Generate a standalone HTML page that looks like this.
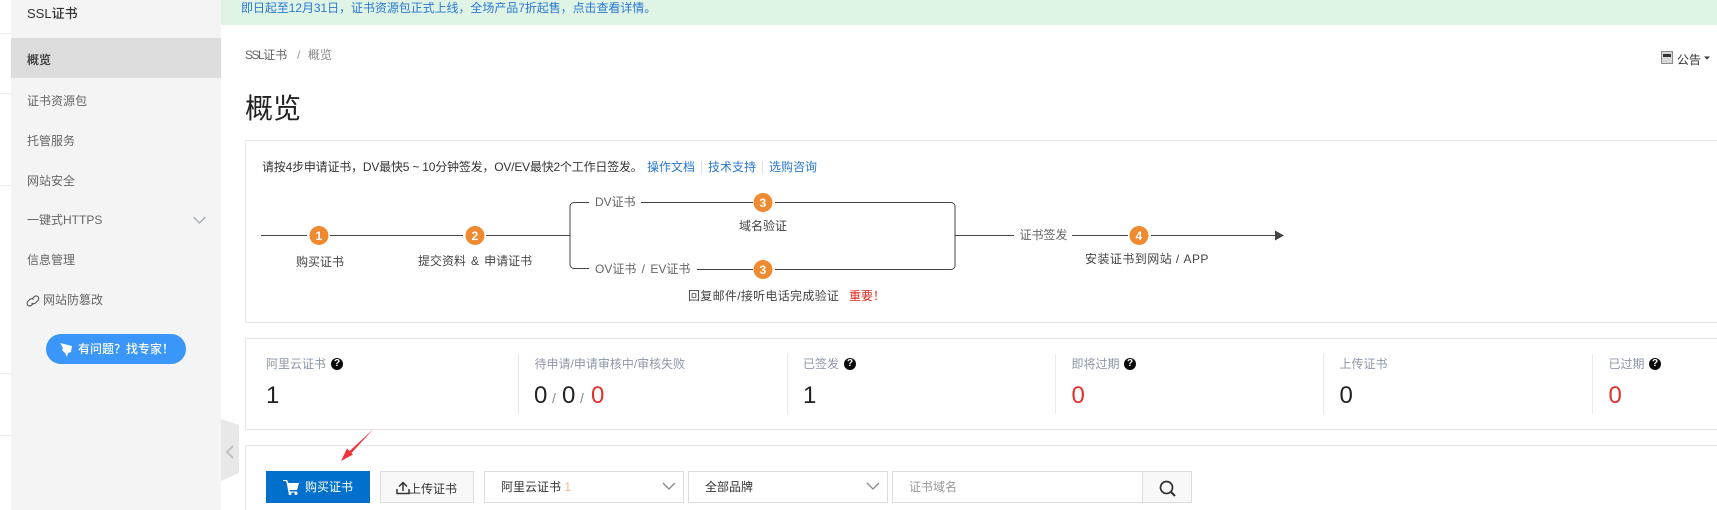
<!DOCTYPE html>
<html lang="zh">
<head>
<meta charset="utf-8">
<title>SSL证书</title>
<style>
html,body{margin:0;padding:0;background:#fff;width:1717px;height:510px;overflow:hidden}
body{position:relative;font-family:"Liberation Sans","Noto Sans CJK SC",sans-serif;font-size:12px;color:#333}
.a{position:absolute;white-space:nowrap;line-height:20px}
.box{position:absolute;box-sizing:border-box}
.side{left:27px;color:#666}
.lab{color:#8c97a8;top:354px}
.val{top:381px;font-size:24px;line-height:30px;color:#222}
.red{color:#e0312c}
.div{position:absolute;top:354px;width:1px;height:60px;background:#eaeaea}
.q{position:absolute;width:12px;height:12px;border-radius:50%;background:#0b0b0b;color:#fff;font:bold 10px/12px "Liberation Sans",sans-serif;text-align:center;top:358px}
.fl{color:#444}
.n{color:#fff;font-weight:bold;font-size:12px}
svg{position:absolute;left:0;top:0}
</style>
</head>
<body>
<div class="box" style="left:0;top:33px;width:11px;height:1px;background:#efefef"></div>
<div class="box" style="left:0;top:93px;width:11px;height:1px;background:#efefef"></div>
<div class="box" style="left:0;top:185px;width:11px;height:1px;background:#efefef"></div>
<div class="box" style="left:0;top:373px;width:11px;height:1px;background:#efefef"></div>
<div class="box" style="left:0;top:435px;width:11px;height:1px;background:#efefef"></div>

<div class="box" style="left:11px;top:0;width:210px;height:510px;background:#f4f4f4"></div>
<div class="box" style="left:11px;top:38px;width:210px;height:40px;background:#dcdcdc"></div>
<div class="a" style="left:27px;top:4px;font-size:13px;font-weight:500;color:#333">SSL证书</div>
<div class="a" style="left:27px;top:50px;font-weight:bold;color:#444">概览</div>
<div class="a side" style="top:91px">证书资源包</div>
<div class="a side" style="top:131px">托管服务</div>
<div class="a side" style="top:171px">网站安全</div>
<div class="a side" style="top:210px">一键式HTTPS</div>
<div class="a side" style="top:250px">信息管理</div>
<div class="a side" style="top:290px;left:43px">网站防篡改</div>
<div class="box" style="left:46px;top:334px;width:140px;height:30px;border-radius:15px;background:#3b96f9"></div>
<div class="a" style="left:78px;top:339px;color:#fff;font-weight:500">有问题？找专家！</div>

<div class="box" style="left:221px;top:0;width:1496px;height:25px;background:#e0f4e6"></div>
<div class="a" style="left:241px;top:-2px;color:#2a78d0;letter-spacing:-.06px">即日起至12月31日，证书资源包正式上线，全场产品7折起售，点击查看详情。</div>

<div class="a" style="left:245px;top:45px;color:#666"><span style="letter-spacing:-1.500px">SSL</span>证书</div>
<div class="a" style="left:297px;top:45px;color:#999">/</div>
<div class="a" style="left:308px;top:45px;color:#888">概览</div>
<div class="a" style="left:245px;top:89px;font-size:28px;line-height:40px;color:#222">概览</div>
<div class="a" style="left:1677px;top:50px;color:#333">公告</div>

<div class="box" style="left:245px;top:140px;width:1480px;height:183px;border:1px solid #e8e8e8"></div>
<div class="box" style="left:245px;top:338px;width:1480px;height:92px;border:1px solid #e8e8e8"></div>
<div class="box" style="left:245px;top:445px;width:1480px;height:80px;border:1px solid #e8e8e8"></div>

<div class="a" style="left:262px;top:157px;color:#333;letter-spacing:-.2px">请按4步申请证书，DV最快5 ~ 10分钟签发，OV/EV最快2个工作日签发。</div>
<div class="a" style="left:647px;top:157px;color:#2a78d0">操作文档</div>
<div class="a" style="left:708px;top:157px;color:#2a78d0">技术支持</div>
<div class="a" style="left:769px;top:157px;color:#2a78d0">选购咨询</div>
<div class="box" style="left:701px;top:161px;width:1px;height:13px;background:#ddd"></div>
<div class="box" style="left:762px;top:161px;width:1px;height:13px;background:#ddd"></div>

<div class="box" style="left:266px;top:471px;width:104px;height:32px;background:#0070cc"></div>
<div class="a" style="left:305px;top:477px;color:#fff">购买证书</div>
<div class="box" style="left:380px;top:471px;width:94px;height:32px;background:#f8f8f8;border:1px solid #ddd"></div>
<div class="box" style="left:484px;top:471px;width:200px;height:32px;border:1px solid #ddd"></div>
<div class="a" style="left:501px;top:477px;color:#333">阿里云证书 <span style="color:#f5b98a">1</span></div>
<div class="box" style="left:688px;top:471px;width:200px;height:32px;border:1px solid #ddd"></div>
<div class="a" style="left:705px;top:477px;color:#333">全部品牌</div>
<div class="box" style="left:892px;top:471px;width:300px;height:32px;border:1px solid #ddd"></div>
<div class="box" style="left:1142px;top:471px;width:50px;height:32px;border:1px solid #ddd;background:#f8f8f8"></div>
<div class="a" style="left:909px;top:477px;color:#999">证书域名</div>
<div class="a" style="left:409px;top:479px;color:#333">上传证书</div>

<svg width="1717" height="510" viewBox="0 0 1717 510" fill="none">
  <!-- sidebar chevron -->
  <path d="M193.500 217l6 6 6-6" stroke="#aab0b8" stroke-width="1.500"/>
  <!-- link icon -->
  <g stroke="#555" stroke-width="1.100" fill="none">
    <path d="M32.500 298.500l1.800-1.800a2.600 2.600 0 0 1 3.700 3.700l-2.600 2.600a2.600 2.600 0 0 1-3.700 0"/>
    <path d="M33.500 299.500a2.600 2.600 0 0 0-3.700 0l-2 2a2.600 2.600 0 0 0 3.700 3.700l1.700-1.700"/>
  </g>
  <!-- expert bird icon -->
  <path d="M60 343l12 3-1 6-3 1-1 4-2-4-3-3 1-2z" fill="#fff"/>
  <!-- collapse handle -->
  <path d="M221 419l18 6v48l-18 8z" fill="#e8e8e8"/>
  <path d="M233 446l-6 6 6 6" stroke="#c2c2c2" stroke-width="2"/>
  <!-- notice icon -->
  <rect x="1661.500" y="51.500" width="11" height="12" fill="#d8d8d8" stroke="#8f8a90"/>
  <rect x="1663" y="54" width="8" height="3" fill="#333"/>
  <path d="M1704 56.500h6l-3 3z" fill="#333"/>
  <!-- flow lines -->
  <g stroke="#444" stroke-width="1">
    <path d="M261 235.500h46M330 235.500h133M486 235.500h84"/>
    <path d="M589 202.500h-15a4 4 0 0 0-4 4v58a4 4 0 0 0 4 4h15"/>
    <path d="M641 202.500h112M697 269.500h56"/>
    <path d="M775 202.500h176a4 4 0 0 1 4 4v59a4 4 0 0 1-4 4h-176"/>
    <path d="M955 235.500h59M1072 235.500h56M1151 235.500h125"/>
  </g>
  <path d="M1275 230.500l9 5-9 5z" fill="#444"/>
  <g fill="#f08a30">
    <circle cx="319" cy="235.500" r="9.500"/>
    <circle cx="475" cy="235.500" r="9.500"/>
    <circle cx="763" cy="202.500" r="9.500"/>
    <circle cx="763" cy="269.500" r="9.500"/>
    <circle cx="1139" cy="235.500" r="9.500"/>
  </g>
  <!-- red arrow -->
  <path d="M373.500 429L350 451.500l3 3-12 6.500 6-12.500 3 3z" fill="#f0323c"/>
  <path d="M373.500 429L349 451.500l2.500 1.500z" fill="#f0323c"/>
  <!-- cart -->
  <g fill="#fff">
    <path d="M283 480h4l1.500 3H299l-2 7h-7.500l.3 1.500H297v1h-8.500l-2-10.500-1-1h-2.500z"/>
    <circle cx="290" cy="493.500" r="1.500"/>
    <circle cx="296" cy="493.500" r="1.500"/>
  </g>
  <!-- upload -->
  <path d="M397 489v4.500h12V489M403 491v-8M399 486.500l4-4 4 4" stroke="#333" stroke-width="1.500"/>
  <!-- select chevrons -->
  <path d="M663 483l6 6 6-6M867 483l6 6 6-6" stroke="#888" stroke-width="1.300"/>
  <!-- search -->
  <circle cx="1166.500" cy="487.500" r="6" stroke="#333" stroke-width="1.700"/>
  <path d="M1171 492l4 4" stroke="#333" stroke-width="2"/>
</svg>

<div class="a n" style="left:315.500px;top:225.500px">1</div>
<div class="a n" style="left:471.500px;top:225.500px">2</div>
<div class="a n" style="left:759.500px;top:192.500px">3</div>
<div class="a n" style="left:759.500px;top:259.500px">3</div>
<div class="a n" style="left:1135.500px;top:225.500px">4</div>

<div class="a fl" style="left:296px;top:252px">购买证书</div>
<div class="a fl" style="left:418px;top:251px;word-spacing:1.700px">提交资料 &amp; 申请证书</div>
<div class="a" style="left:595px;top:192px;color:#666">DV证书</div>
<div class="a" style="left:595px;top:259px;color:#666;word-spacing:2px">OV证书 / EV证书</div>
<div class="a fl" style="left:739px;top:216px">域名验证</div>
<div class="a fl" style="left:688px;top:286px;letter-spacing:.3px">回复邮件/接听电话完成验证</div>
<div class="a" style="left:849px;top:286px;color:#e0261e">重要！</div>
<div class="a" style="left:1019.500px;top:225px;color:#666">证书签发</div>
<div class="a fl" style="left:1085px;top:249px;letter-spacing:.45px">安装证书到网站 / APP</div>

<div class="a lab" style="left:266px">阿里云证书</div><div class="q" style="left:331px">?</div>
<div class="a val" style="left:266px">1</div>
<div class="div" style="left:518px"></div>
<div class="a lab" style="left:534.500px">待申请/申请审核中/审核失败</div>
<div class="a val" style="left:534px">0</div>
<div class="a" style="left:552px;top:388px;color:#888;font-size:14px">/</div>
<div class="a val" style="left:562px">0</div>
<div class="a" style="left:580px;top:388px;color:#888;font-size:14px">/</div>
<div class="a val red" style="left:591px">0</div>
<div class="div" style="left:787px"></div>
<div class="a lab" style="left:803px">已签发</div><div class="q" style="left:844px">?</div>
<div class="a val" style="left:803px">1</div>
<div class="div" style="left:1055px"></div>
<div class="a lab" style="left:1071.500px">即将过期</div><div class="q" style="left:1124px">?</div>
<div class="a val red" style="left:1071.500px">0</div>
<div class="div" style="left:1323px"></div>
<div class="a lab" style="left:1339.500px">上传证书</div>
<div class="a val" style="left:1339.500px">0</div>
<div class="div" style="left:1592px"></div>
<div class="a lab" style="left:1608.500px">已过期</div><div class="q" style="left:1649px">?</div>
<div class="a val red" style="left:1608.500px">0</div>
</body>
</html>
